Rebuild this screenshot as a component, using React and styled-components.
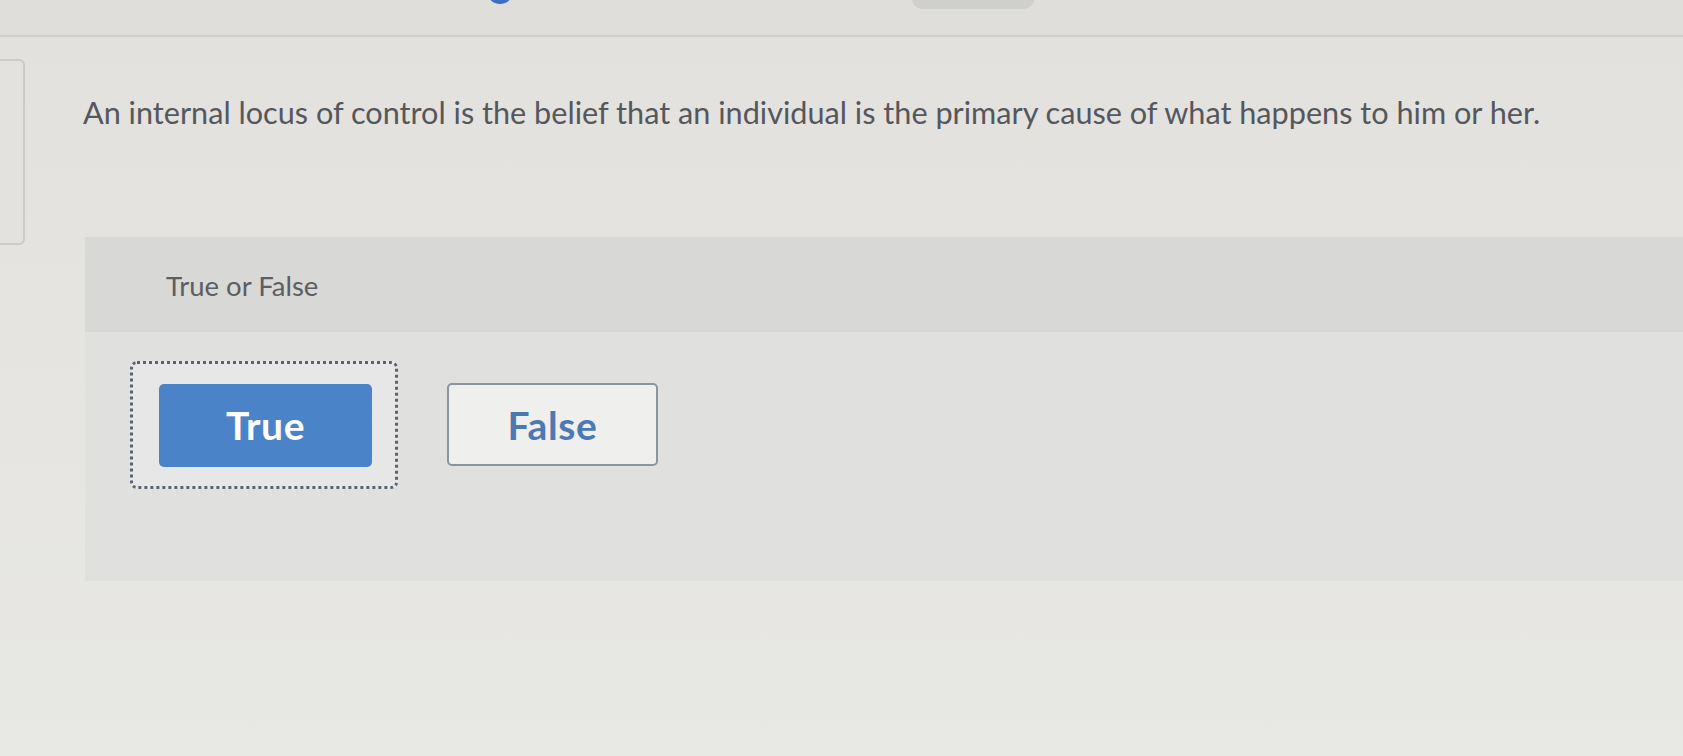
import React from "react";
import styled, { createGlobalStyle } from "styled-components";

const Global = createGlobalStyle`
  html, body { margin: 0; padding: 0; }
  body {
    background: #e5e4e1;
    font-family: "Lato", "Open Sans", "Liberation Sans", sans-serif;
    width: 1683px;
    height: 756px;
    overflow: hidden;
  }
`;

const Page = styled.div`
  width: 1683px;
  height: 756px;
  display: flex;
  flex-direction: column;
  background: linear-gradient(180deg, #e2e1de 0%, #e6e5e2 60%, #e8e8e5 100%);
`;

const TopBar = styled.header`
  height: 35px;
  flex: none;
  display: flex;
  align-items: flex-start;
  background: #dfdedb;
  border-bottom: 2px solid #cfceca;
  overflow: hidden;
`;

const Avatar = styled.span`
  width: 26px;
  height: 26px;
  margin-left: 487px;
  margin-top: -22px;
  border-radius: 50%;
  background: #3c6fc2;
`;

const Pill = styled.span`
  width: 122px;
  height: 30px;
  margin-left: 399px;
  margin-top: -21px;
  border-radius: 10px;
  background: #cfcfcd;
`;

const Body = styled.div`
  flex: 1;
  display: flex;
  align-items: flex-start;
`;

const SideTab = styled.div`
  width: 23px;
  height: 182px;
  margin-top: 22px;
  flex: none;
  border: 2px solid #cbcac6;
  border-left: none;
  border-radius: 0 6px 6px 0;
  background: #e3e2df;
`;

const Main = styled.main`
  flex: 1;
  padding-left: 58px;
  padding-top: 58px;
  display: flex;
  flex-direction: column;
`;

const Question = styled.p`
  margin: 0;
  font-size: 30.65px;
  line-height: 1.2;
  color: #55575c;
  white-space: nowrap;
`;

const Panel = styled.section`
  margin-top: 105px;
  margin-left: 2px;
  background: #e0e0de;
`;

const PanelHeader = styled.div`
  background: #d8d8d6;
  height: 95px;
  box-sizing: border-box;
  padding: 32px 0 0 81px;
  font-size: 27.5px;
  line-height: 1.2;
  color: #5c5e63;
`;

const Choices = styled.div`
  display: flex;
  align-items: center;
  gap: 49px;
  padding: 29px 0 92px 45px;
`;

const FocusRing = styled.div`
  box-sizing: border-box;
  padding: 20px 23px 19px 26px;
  border: 3px dotted #5a6470;
  border-radius: 7px;
  background: #e6e7e6;
`;

const Choice = styled.button`
  box-sizing: border-box;
  width: ${(p) => (p.$selected ? 213 : 211)}px;
  height: 83px;
  display: flex;
  align-items: center;
  justify-content: center;
  border-radius: 5px;
  font-family: "Lato", "Open Sans", sans-serif;
  font-weight: 700;
  font-size: 39px;
  letter-spacing: 0.6px;
  cursor: pointer;
  padding: 0;
  background: ${(p) => (p.$selected ? "#4a83c7" : "#efefee")};
  color: ${(p) => (p.$selected ? "#ffffff" : "#4d79b3")};
  border: ${(p) => (p.$selected ? "none" : "2px solid #8b949f")};
`;

export default function App() {
  return (
    <>
      <Global />
      <Page>
        <TopBar>
          <Avatar />
          <Pill />
        </TopBar>
        <Body>
          <SideTab />
          <Main>
            <Question>
              An internal locus of control is the belief that an individual is the primary cause of what happens to him or her.
            </Question>
            <Panel>
              <PanelHeader>True or False</PanelHeader>
              <Choices>
                <FocusRing>
                  <Choice $selected>True</Choice>
                </FocusRing>
                <Choice>False</Choice>
              </Choices>
            </Panel>
          </Main>
        </Body>
      </Page>
    </>
  );
}
